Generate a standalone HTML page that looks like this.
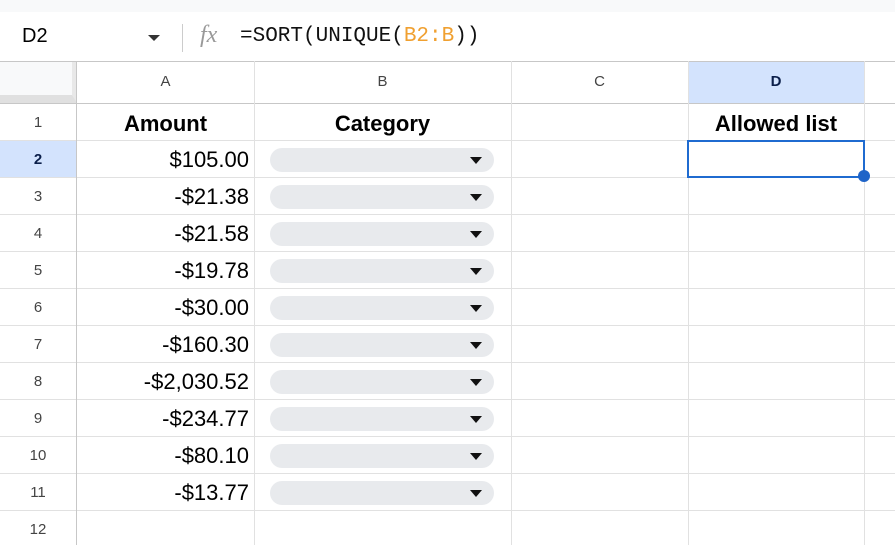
<!DOCTYPE html><html><head><style>
body{margin:0;width:895px;height:545px;overflow:hidden;background:#fff;font-family:"Liberation Sans",Arial,sans-serif;position:relative}
.a{position:absolute}
.vl{position:absolute;top:61px;bottom:0;width:1px;background:#e1e1e1}
.hl{position:absolute;left:0;right:0;height:1px;background:#e1e1e1}
.rn{position:absolute;left:0;width:76px;text-align:center;font-size:15px;color:#444;height:37px;line-height:37px}
.amt{position:absolute;left:77px;width:172px;text-align:right;font-size:22px;color:#000;height:37px;line-height:37px}
.chip{position:absolute;left:270px;width:224px;height:24px;border-radius:12px;background:#e8eaed}
.chip:after{content:"";position:absolute;right:12px;top:9px;border-left:6px solid transparent;border-right:6px solid transparent;border-top:7px solid #111}
.ch{position:absolute;top:61px;height:42px;line-height:42px;text-align:center;font-size:15px;color:#444}
</style></head><body>
<div class="a" style="left:0;top:0;width:895px;height:12px;background:#f8f9fa"></div>
<div class="a" style="left:22px;top:25px;font-size:20px;color:#000">D2</div>
<div class="a" style="left:148px;top:35px;border-left:6px solid transparent;border-right:6px solid transparent;border-top:6px solid #333"></div>
<div class="a" style="left:182px;top:24px;width:1px;height:28px;background:#ccc"></div>
<div class="a" style="left:200px;top:22px;font-size:24px;font-style:italic;font-family:'Liberation Serif',serif;color:#999">fx</div>
<div class="a" style="left:240px;top:25px;font-size:21px;font-family:'Liberation Mono',monospace;color:#111">=SORT(UNIQUE(<span style="color:#f0a030">B2:B</span>))</div>
<div class="hl" style="top:61px;background:#c7c7c7"></div>
<div class="a" style="left:0;top:62px;width:72px;height:33px;background:#f8f9fa;border-right:5px solid #e8e8e8;border-bottom:8px solid #e0e0e0"></div>
<div class="a" style="left:688px;top:62px;width:176px;height:41px;background:#d3e3fd"></div>
<div class="a" style="left:0;top:141px;width:76px;height:37px;background:#d3e3fd"></div>
<div class="ch" style="left:77px;width:177px">A</div>
<div class="ch" style="left:254px;width:257px">B</div>
<div class="ch" style="left:511px;width:177px">C</div>
<div class="ch" style="left:688px;width:176px;font-weight:bold;color:#0b1f4a">D</div>
<div class="hl" style="top:103px;background:#c7c7c7"></div>
<div class="hl" style="top:140px"></div><div class="hl" style="top:177px"></div><div class="hl" style="top:214px"></div><div class="hl" style="top:251px"></div><div class="hl" style="top:288px"></div><div class="hl" style="top:325px"></div><div class="hl" style="top:362px"></div><div class="hl" style="top:399px"></div><div class="hl" style="top:436px"></div><div class="hl" style="top:473px"></div><div class="hl" style="top:510px"></div>
<div class="vl" style="left:76px;background:#c7c7c7"></div>
<div class="vl" style="left:254px"></div><div class="vl" style="left:511px"></div><div class="vl" style="left:688px"></div><div class="vl" style="left:864px"></div>
<div class="rn" style="top:104px">1</div>
<div class="rn" style="top:141px;font-weight:bold;color:#0b1f4a">2</div>
<div class="rn" style="top:178px">3</div><div class="rn" style="top:215px">4</div><div class="rn" style="top:252px">5</div><div class="rn" style="top:289px">6</div><div class="rn" style="top:326px">7</div><div class="rn" style="top:363px">8</div><div class="rn" style="top:400px">9</div><div class="rn" style="top:437px">10</div><div class="rn" style="top:474px">11</div><div class="rn" style="top:511px">12</div>
<div class="a" style="left:77px;width:177px;top:104px;height:37px;line-height:40px;text-align:center;font-size:22px;font-weight:bold">Amount</div>
<div class="a" style="left:254px;width:257px;top:104px;height:37px;line-height:40px;text-align:center;font-size:22px;font-weight:bold">Category</div>
<div class="a" style="left:688px;width:176px;top:104px;height:37px;line-height:40px;text-align:center;font-size:22px;font-weight:bold">Allowed list</div>
<div class="amt" style="top:141px">$105.00</div><div class="amt" style="top:178px">-$21.38</div><div class="amt" style="top:215px">-$21.58</div><div class="amt" style="top:252px">-$19.78</div><div class="amt" style="top:289px">-$30.00</div><div class="amt" style="top:326px">-$160.30</div><div class="amt" style="top:363px">-$2,030.52</div><div class="amt" style="top:400px">-$234.77</div><div class="amt" style="top:437px">-$80.10</div><div class="amt" style="top:474px">-$13.77</div>
<div class="chip" style="top:148px"></div><div class="chip" style="top:185px"></div><div class="chip" style="top:222px"></div><div class="chip" style="top:259px"></div><div class="chip" style="top:296px"></div><div class="chip" style="top:333px"></div><div class="chip" style="top:370px"></div><div class="chip" style="top:407px"></div><div class="chip" style="top:444px"></div><div class="chip" style="top:481px"></div>
<div class="a" style="left:687px;top:140px;width:174px;height:34px;border:2px solid #1f6bd0"></div>
<div class="a" style="left:858px;top:170px;width:12px;height:12px;border-radius:50%;background:#1f64c8"></div>
</body></html>
